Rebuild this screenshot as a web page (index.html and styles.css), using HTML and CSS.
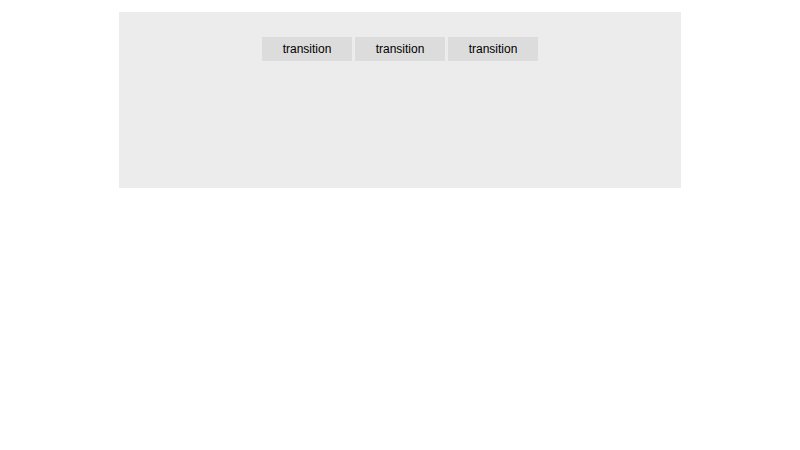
FILE: index.html
```html
<!DOCTYPE html>
<html lang="en">
<head>
    <meta charset="UTF-8">
    <meta name="viewport" content="width=device-width, initial-scale=1.0">
    <title>Transition</title>
    <link rel="stylesheet" href="styles.css">
</head>
<body>
    <div class="stage">
        <div class="buttons">
            <div class="btn">transition</div>
            <div class="btn">transition</div>
            <div class="btn">transition</div>
        </div>
    </div>
</body>
</html>
```
FILE: styles.css
```css
body {
    margin: 8px;
    font-family: "Liberation Sans", Arial, sans-serif;
    background: #fff;
}

.stage {
    width: 562px;
    height: 176px;
    margin: 4px auto 0;
    padding-top: 25px;
    box-sizing: border-box;
    background-color: #ececec;
}

.buttons {
    display: flex;
    justify-content: center;
    gap: 3px;
}

.btn {
    width: 90px;
    height: 24px;
    line-height: 24px;
    text-align: center;
    font-size: 12px;
    color: #000;
    background-color: #dcdcdc;
}
```
